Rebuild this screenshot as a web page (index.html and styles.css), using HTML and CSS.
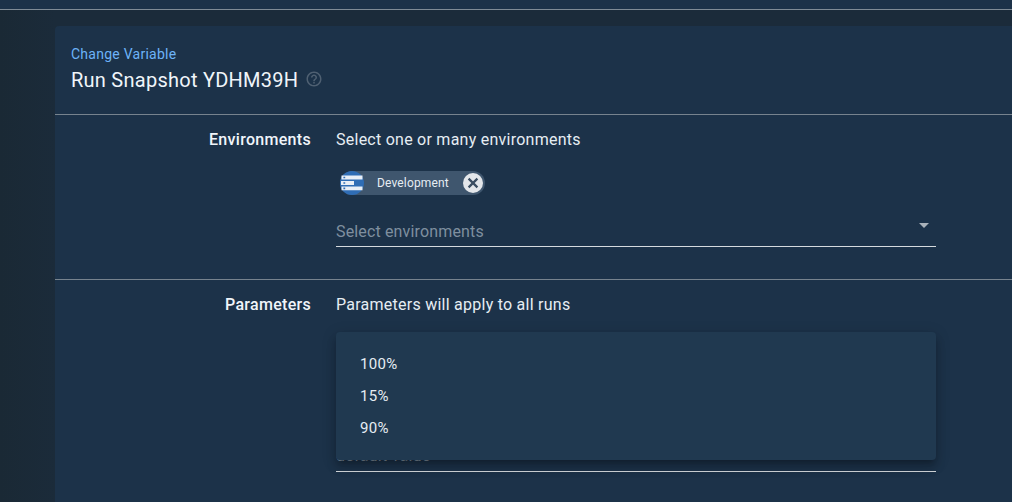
FILE: index.html
```html
<!DOCTYPE html>
<html lang="en">
<head>
<meta charset="utf-8">
<title>Run Snapshot</title>
<link rel="stylesheet" href="styles.css">
</head>
<body>
<div class="topbar"></div>
<main class="page">
  <section class="card">
    <header class="card-head">
      <a class="crumb">Change Variable</a>
      <h1 class="title">Run Snapshot YDHM39H
        <svg class="help" viewBox="0 0 24 24" width="18" height="18"><path fill="currentColor" d="M11 18h2v-2h-2v2zm1-16C6.48 2 2 6.48 2 12s4.48 10 10 10 10-4.48 10-10S17.52 2 12 2zm0 18c-4.41 0-8-3.59-8-8s3.59-8 8-8 8 3.59 8 8-3.59 8-8 8zm0-14c-2.21 0-4 1.79-4 4h2c0-1.1.9-2 2-2s2 .9 2 2c0 2-3 1.75-3 5h2c0-2.25 3-2.5 3-5 0-2.21-1.79-4-4-4z"/></svg>
      </h1>
    </header>
    <div class="row row-env">
      <div class="label">Environments</div>
      <div class="field">
        <p class="hint">Select one or many environments</p>
        <div class="chip">
          <span class="chip-icon">
            <svg viewBox="0 0 24 24" width="24" height="24"><circle cx="12" cy="12" r="12" fill="#2f6db5"/><path fill="#e8eef6" d="M1.5 4.6h21v3.8h-21zM1 10h13v3.9H1zM1.5 15.6h21v3.6h-21z"/><path fill="#2f6db5" d="M3.4 5.7h1.8v1.6H3.4zM3.4 11.2h1.8v1.6H3.4zM3.4 16.6h1.8v1.6H3.4z"/></svg>
          </span>
          <span class="chip-text">Development</span>
          <span class="chip-x">
            <svg viewBox="0 0 20 20" width="20" height="20"><circle cx="10" cy="10" r="10" fill="#e3e6ea"/><path stroke="#3a4d61" stroke-width="2.2" d="M5.6 5.6l8.8 8.8M14.4 5.6l-8.8 8.8"/></svg>
          </span>
        </div>
        <div class="select">
          <span class="placeholder">Select environments</span>
          <span class="caret"></span>
        </div>
      </div>
    </div>
    <div class="row row-params">
      <div class="label">Parameters</div>
      <div class="field">
        <p class="hint">Parameters will apply to all runs</p>
        <div class="param-wrap">
          <div class="input"><span class="default">default value</span></div>
          <ul class="menu">
            <li>100%</li>
            <li>15%</li>
            <li>90%</li>
          </ul>
        </div>
      </div>
    </div>
  </section>
</main>
</body>
</html>
```
FILE: styles.css
```css
* { box-sizing: border-box; }
html, body { margin: 0; height: 100%; }
body {
  width: 1012px;
  height: 502px;
  overflow: hidden;
  background: linear-gradient(90deg, #1a2935 0, #1b2b3a 55px);
  font-family: Roboto, "Liberation Sans", sans-serif;
  letter-spacing: .25px;
  color: #e6edf3;
}
.topbar {
  height: 10px;
  background: #1c3249;
  border-bottom: 1px solid #7f8b96;
}
.page { padding: 16px 0 0 55px; }
.card {
  background: #1c3249;
  border-radius: 4px 0 0 0;
  height: 476px;
}
.card-head {
  height: 89px;
  padding: 20px 16px 0;
  border-bottom: 1px solid #77838e;
}
.crumb {
  display: block;
  font-size: 14px;
  line-height: 16px;
  color: #6db3f8;
}
.title {
  margin: 5px 0 0;
  display: flex;
  align-items: center;
  gap: 7px;
  font-size: 20px;
  font-weight: 400;
  line-height: 26px;
  color: #f0f5fa;
}
.help { color: #4f6072; margin-top: -3px; }
.row { display: flex; border-bottom: 1px solid #77838e; }
.row-env { height: 165px; }
.row-params { border-bottom: 0; }
.label {
  width: 256px;
  padding-top: 15px;
  text-align: right;
  font-size: 16px;
  line-height: 20px;
  font-weight: 500;
  letter-spacing: .3px;
  color: #f0f5fa;
}
.field { margin-left: 25px; width: 600px; }
.hint {
  margin: 15px 0 0;
  font-size: 16px;
  line-height: 20px;
  color: #e6edf3;
}
.chip {
  margin-top: 21px;
  width: 145px;
  height: 24px;
  margin-left: 4px;
  display: flex;
  align-items: center;
  background: #3f566e;
  border-radius: 12px;
}
.chip-icon { width: 24px; height: 24px; display: flex; }
.chip-text {
  margin-left: 13px;
  font-size: 12px;
  line-height: 16px;
  letter-spacing: .15px;
  color: #e6edf3;
}
.chip-x { margin-left: auto; margin-right: 2px; width: 20px; height: 20px; display: flex; }
.select {
  margin-top: 12px;
  height: 40px;
  position: relative;
  border-bottom: 1px solid #d5dade;
  display: flex;
  align-items: flex-end;
  padding-bottom: 4px;
}
.placeholder { font-size: 16px; line-height: 20px; letter-spacing: .15px; color: #7f8f9f; }
.caret {
  position: absolute;
  right: 7px;
  top: 16px;
  width: 0;
  height: 0;
  border-left: 5px solid transparent;
  border-right: 5px solid transparent;
  border-top: 5px solid #a9b2ba;
}
.param-wrap { position: relative; margin-top: 17px; height: 140px; }
.input {
  height: 140px;
  border-bottom: 1px solid #d5dade;
  position: relative;
}
.default {
  position: absolute;
  left: 0;
  bottom: 5px;
  font-size: 16px;
  line-height: 20px;
  color: #7f8f9f;
}
.menu {
  position: absolute;
  left: 0;
  top: 0;
  width: 100%;
  height: 128px;
  margin: 0;
  padding: 16px 0;
  list-style: none;
  background: #203950;
  border-radius: 4px;
  box-shadow: 0 5px 5px -3px rgba(0,0,0,.2), 0 8px 10px 1px rgba(0,0,0,.14), 0 3px 14px 2px rgba(0,0,0,.12);
}
.menu li {
  height: 32px;
  padding-left: 24px;
  font-size: 15px;
  line-height: 32px;
  letter-spacing: .3px;
  color: #e6edf3;
}
```
